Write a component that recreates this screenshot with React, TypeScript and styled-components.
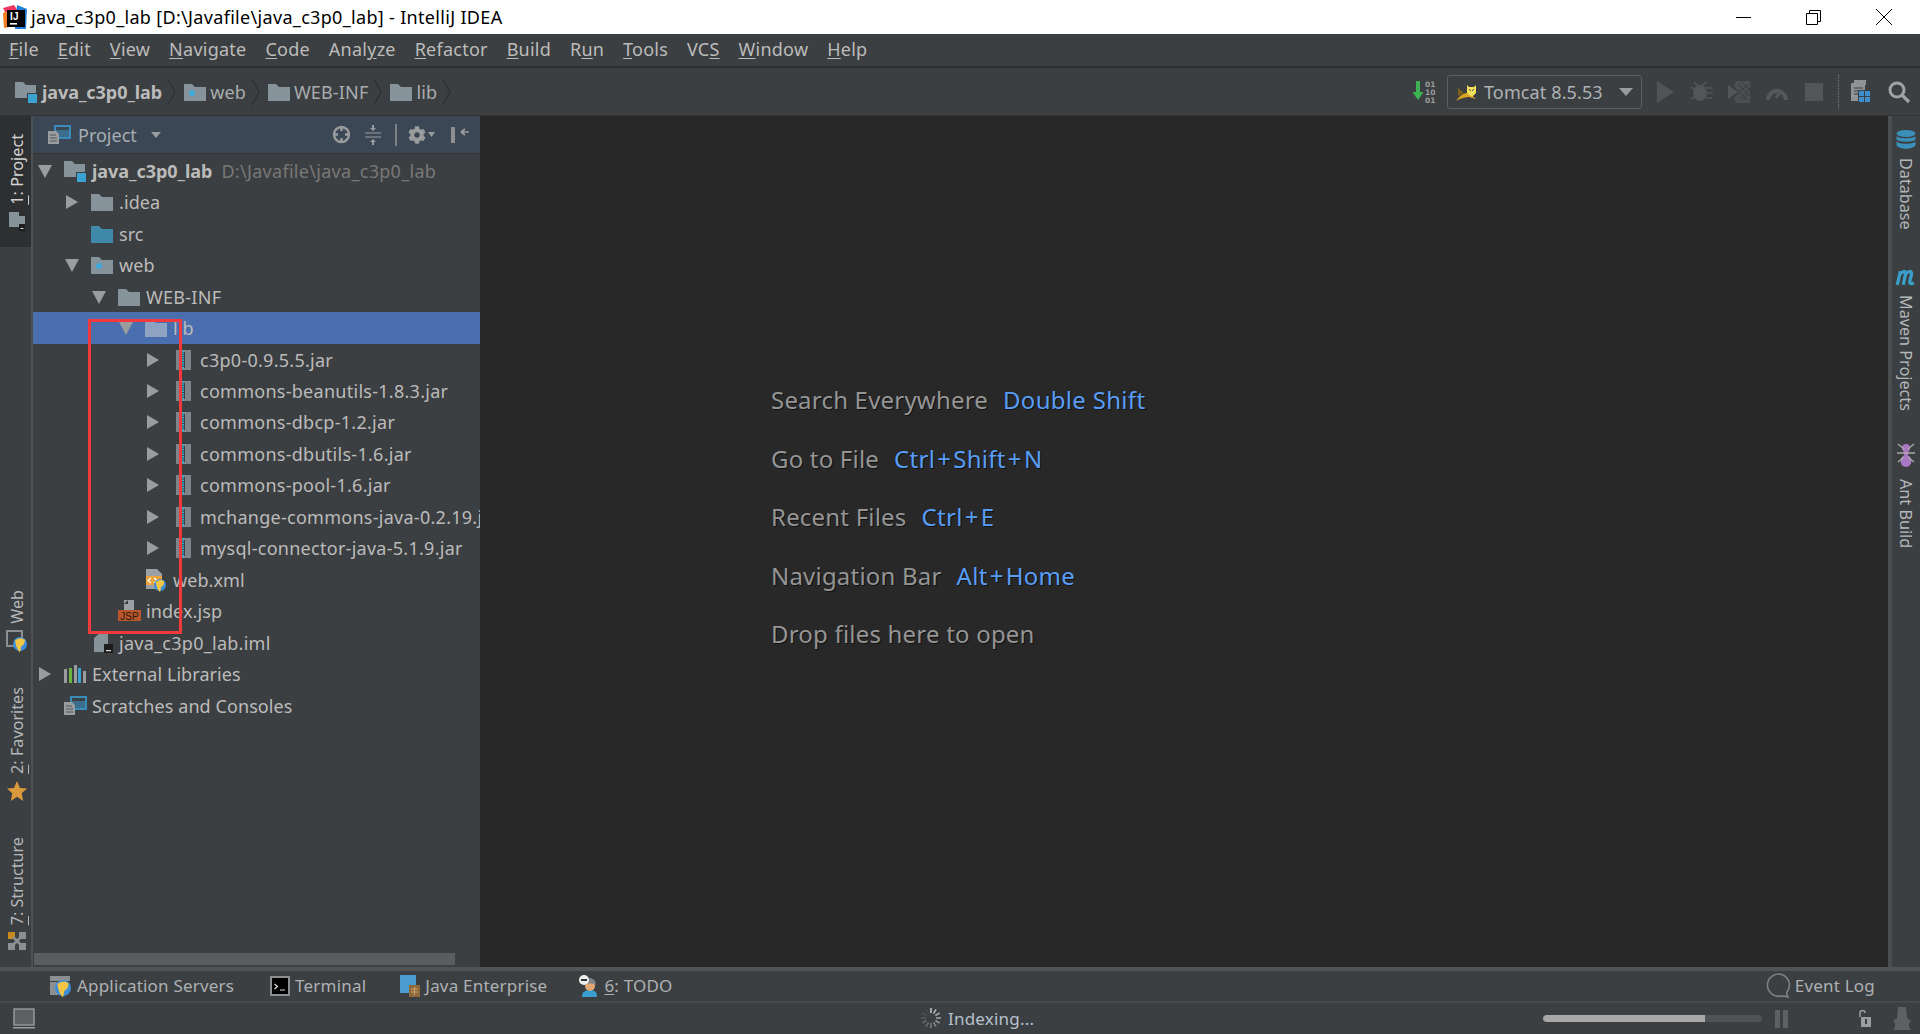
import React from "react";
import styled, { createGlobalStyle } from "styled-components";
import { FaCog } from "react-icons/fa";

const Global = createGlobalStyle`
  html, body { margin: 0; padding: 0; background: #3c3f41; }
  * { box-sizing: border-box; }
`;
const UI = `"Noto Sans", "Open Sans", sans-serif`;

const Win = styled.div`
  width: 1920px; height: 1034px; display: flex; flex-direction: column; overflow: hidden;
  background: #3c3f41; font-family: ${UI}; color: #bbb;
`;
const TitleBar = styled.div`
  height: 34px; flex: none; background: #fff; color: #000; display: flex; align-items: center;
  padding-left: 3px; font-size: 18px; letter-spacing: 0.32px;
`;
const TitleText = styled.span` margin-left: 4px; flex: 1; `;
const WinButtons = styled.div` display: flex; align-items: center; padding-right: 28px; gap: 55px; `;
const MenuBar = styled.div`
  height: 34px; flex: none; display: flex; align-items: center; padding: 0 0 2px 9px; gap: 18.9px;
  font-size: 18px; border-bottom: 2px solid #2c2c2c; letter-spacing: 0.25px;
`;
const NavBar = styled.div`
  height: 48px; flex: none; display: flex; align-items: center; padding: 0 10px 0 15px;
  border-bottom: 1px solid #323232; font-size: 18px;
`;
const Crumb = styled.span<{ $bold?: boolean }>`
  margin-left: 4px; font-weight: ${p => (p.$bold ? 700 : 400)}; color: ${p => (p.$bold ? "#bbb" : "#a9adb0")};
  letter-spacing: ${p => (p.$bold ? "-0.05px" : "0.15px")};
`;
const Chevron = styled.span` display: flex; margin: 0 8px 0 6px; `;
const Spacer = styled.div` flex: 1; `;
const ToolIcon = styled.span<{ $ml?: number }>` display: flex; margin-left: ${p => p.$ml ?? 0}px; `;
const RunCombo = styled.div`
  width: 195px; height: 34px; margin-left: 10px; border: 1px solid #5b5e60; border-radius: 3px; background: #3c3f41;
  display: flex; align-items: center; padding: 0 0 0 8px; font-size: 18px; color: #adb2b5; letter-spacing: 0.12px;
`;
const ComboText = styled.span` margin-left: 6px; flex: 1; `;
const DotSep = styled.span`
  width: 0; height: 34px; border-left: 1px dotted #777; margin-left: 15px;
`;
const Main = styled.div` flex: 1; display: flex; min-height: 0; `;
const LeftStrip = styled.div`
  width: 33px; flex: none; display: flex; flex-direction: column; justify-content: space-between;
  border-right: 2px solid #4d4f51; padding-bottom: 17px;
`;
const RightStrip = styled.div`
  width: 32px; flex: none; display: flex; flex-direction: column; border-left: 4px solid #4b4d4f; padding-top: 14px;
`;
const StripGroup = styled.div` display: flex; flex-direction: column; gap: 36px; `;
const SideTab = styled.div<{ $active?: boolean; $right?: boolean; $gap?: number; $mt?: number }>`
  display: flex; flex-direction: column; align-items: center; gap: ${p => p.$gap ?? 7}px;
  background: ${p => (p.$active ? "#2d2f30" : "transparent")};
  margin-top: ${p => p.$mt ?? 0}px;
  padding: ${p => (p.$active ? "18px 0 16px 3px" : p.$right ? "0" : "0 0 0 3px")};
`;
const VLabel = styled.span<{ $right?: boolean; $active?: boolean }>`
  writing-mode: vertical-rl; transform: ${p => (p.$right ? "none" : "rotate(180deg)")};
  font-size: 16.2px; line-height: 20px; white-space: nowrap; color: ${p => (p.$active ? "#d4d4d4" : "#b4b8ba")};
  letter-spacing: 0;
`;
const Panel = styled.div` width: 447px; flex: none; display: flex; flex-direction: column; position: relative; `;
const PanelHeader = styled.div`
  height: 38px; flex: none; background: #3b4754; border-bottom: 1px solid #323232; display: flex; align-items: center;
  padding-left: 15px; font-size: 18px; color: #a7adb3;
`;
const HeaderTitle = styled.span` margin-left: 8px; `;
const HSep = styled.span` width: 2px; height: 22px; background: #7b8186; margin-left: 14px; `;
const Tree = styled.div` flex: 1; overflow: hidden; padding-top: 1px; `;
const Row = styled.div<{ $depth: number; $selected?: boolean }>`
  height: 31.47px; display: flex; align-items: center; white-space: nowrap; overflow: hidden;
  padding-left: ${p => 4 + 27 * p.$depth}px; font-size: 18px;
  background: ${p => (p.$selected ? "#4b6eaf" : "transparent")}; color: #bbb;
`;
const ArrowSlot = styled.span` width: 27px; flex: none; display: flex; padding-left: 1px; `;
const IconSlot = styled.span` width: 27px; flex: none; display: flex; align-items: center; `;
const RowName = styled.span<{ $bold?: boolean; $wide?: boolean }>`
  margin-left: 1px; font-weight: ${p => (p.$bold ? 700 : 400)};
  letter-spacing: ${p => (p.$bold ? "-0.03px" : p.$wide ? "0.27px" : "0.08px")};
`;
const RowHint = styled.span` margin-left: 9px; color: #787878; letter-spacing: 0.3px; `;
const Mark = styled.div`
  position: absolute; left: 55px; top: 203px; width: 94px; height: 315px; border: 3px solid #f23a3c; pointer-events: none;
`;
const ScrollTrack = styled.div` height: 14px; flex: none; padding: 0 25px 2px 1px; `;
const ScrollThumb = styled.div` height: 12px; background: #5a5c5e; `;
const Editor = styled.div`
  flex: 1; background: #282828; display: flex; flex-direction: column; gap: 24.6px; padding: 267px 0 0 291px;
`;
const Hint = styled.div`
  font-size: 24px; line-height: 34px; color: #959595; text-shadow: 1px 1px 0 #111; letter-spacing: 0.2px;
`;
const Key = styled.span` color: #589df6; margin-left: 15px; letter-spacing: 0.3px; `;
const Plus = styled.span` margin: 0 2px; `;
const BottomBar = styled.div`
  height: 34px; flex: none; border-top: 4px solid #515354; display: flex; align-items: center; font-size: 17px; color: #adb1b4; letter-spacing: 0.2px;
  padding-bottom: 1px;
`;
const BottomTab = styled.div<{ $ml: number }>`
  display: flex; align-items: center; gap: 5px; margin-left: ${p => p.$ml}px;
`;
const StatusBar = styled.div`
  height: 33px; flex: none; border-top: 2px solid #46484a; display: flex; align-items: center; font-size: 17px; color: #b4c0cc;
  padding-left: 13px; letter-spacing: 0.2px;
`;
const Indexing = styled.div` display: flex; align-items: center; gap: 7px; margin-left: 886px; width: 622px; padding-bottom: 1px; `;
const Progress = styled.div` width: 219px; height: 7px; border-radius: 4px; background: #505254; overflow: hidden; flex: none; `;
const ProgressFill = styled.div` height: 100%; background: #a8a8a8; border-radius: 4px 0 0 4px; `;

const Svg = ({ w, h, children, vb }: { w: number; h: number; vb?: string; children: React.ReactNode }) => (
  <svg width={w} height={h} viewBox={vb ?? `0 0 ${w} ${h}`} style={{ flex: "none", overflow: "visible" }}>{children}</svg>
);

const ArrowRight = () => <Svg w={14} h={14}><path d="M1 0l12 7-12 7z" fill="#9a9c9e" /></Svg>;
const ArrowDown = () => <Svg w={14} h={14}><path d="M0 1h14L7 14z" fill="#9a9c9e" /></Svg>;
const Folder = ({ c = "#87939a", dot }: { c?: string; dot?: boolean }) => (
  <Svg w={22} h={20}>
    <path d="M0 2h8l3 3h11v14H0z" fill={c} />
    {dot && <circle cx="8" cy="11" r="3" fill="#40a8d8" />}
  </Svg>
);
const RootFolder = () => (
  <Svg w={23} h={22}>
    <path d="M0 1h8l3 3h10v13H0z" fill="#87939a" />
    <rect x="12" y="12" width="11" height="10" fill="#3c3f41" />
    <rect x="13" y="13" width="9" height="9" fill="#3aa3d2" />
  </Svg>
);
const Jar = () => (
  <Svg w={20} h={20}>
    <rect x="4" y="0" width="4" height="20" fill="#7d858a" />
    <rect x="13" y="0" width="6" height="20" fill="#7d858a" />
    <rect x="4" y="0" width="15" height="2" fill="#7d858a" />
    <rect x="4" y="18" width="15" height="2" fill="#7d858a" />
    <path d="M10.5 0v20" stroke="#35b4d8" strokeWidth="3" strokeDasharray="1.4 1" />
  </Svg>
);
const Globe = ({ x, y, r }: { x: number; y: number; r: number }) => (
  <g>
    <circle cx={x} cy={y} r={r} fill="#3d8ed8" />
    <path d={`M${x - r * 0.7} ${y - r * 0.5}q${r * 0.7} ${-r * 0.6} ${r * 1.4} ${-r * 0.1}q0 ${r * 0.7} ${-r * 0.5} ${r * 0.9}l${-r * 0.2} ${r * 0.9}q${-r * 0.6} ${-r * 0.6} ${-r * 0.7} ${-r * 1.7}z`} fill="#f3c544" />
  </g>
);
const XmlIcon = () => (
  <Svg w={22} h={22}>
    <path d="M1 0h11l5 5v15H1z" fill="#9aa1a5" />
    <rect x="1" y="7" width="16" height="9" fill="#eda13a" />
    <path d="M6 9l-3 2.5 3 2.5M9 9l3 2.5-3 2.5" stroke="#fff" strokeWidth="1.2" fill="none" />
    <Globe x={15} y={16} r={6} />
  </Svg>
);
const JspIcon = () => (
  <Svg w={24} h={22}>
    <path d="M6 0h10v10H6z" fill="#9aa1a5" />
    <path d="M6 4l4-4v4z" fill="#3c3f41" />
    <rect x="0" y="10" width="23" height="11" fill="#b7562a" />
    <text x="11.5" y="19.5" textAnchor="middle" fontFamily={"Liberation Sans, sans-serif"} fontSize="10" fill="#2a1a10">JSP</text>
  </Svg>
);
const ImlIcon = () => (
  <Svg w={24} h={22}>
    <path d="M3 6l7-6h7v12h-4v8H3z" fill="#87939a" />
    <rect x="13" y="12" width="9" height="9" fill="#1e1e1e" />
    <rect x="15" y="18" width="5" height="1.2" fill="#ddd" />
  </Svg>
);
const LibIcon = () => (
  <Svg w={22} h={20}>
    <rect x="0" y="5" width="3" height="14" fill="#9a9c9e" />
    <rect x="5" y="4" width="3" height="15" fill="#6cb33f" />
    <rect x="10" y="1" width="3" height="18" fill="#9a9c9e" />
    <rect x="14" y="4" width="3" height="15" fill="#3aa3d2" />
    <rect x="19" y="7" width="3" height="12" fill="#9a9c9e" />
  </Svg>
);
const ProjectIcon = () => (
  <Svg w={22} h={18}>
    <rect x="7" y="0" width="15" height="12" fill="none" stroke="#3a8cb8" strokeWidth="2" />
    <rect x="8" y="4" width="13" height="7" fill="#3a6e8c" />
    <path d="M0 5h8l3 3v10H0z" fill="#9a9c9e" />
    <path d="M2 9h6M2 12h7M2 15h7" stroke="#555" strokeWidth="1" />
  </Svg>
);
const Logo = () => (
  <Svg w={24} h={26}>
    <path d="M0 4L11 1l4 6-11 5z" fill="#f0355f" />
    <path d="M0 9l5-2 1 16-5 1z" fill="#f57c1f" />
    <path d="M14 1l10 4-1 20H12z" fill="#1f7ed8" />
    <rect x="4" y="6" width="18" height="17" fill="#000" />
    <text x="7" y="15.5" fontFamily={"Liberation Sans, sans-serif"} fontSize="10" fontWeight="700" fill="#fff">IJ</text>
    <rect x="7" y="19" width="7" height="1.6" fill="#fff" />
  </Svg>
);
const Tomcat = () => (
  <Svg w={22} h={20}>
    <path d="M0 19C5 12 8 11 13 11l7 6-7-2c-3 0-8 1-13 4z" fill="#d9a520" />
    <path d="M2 6l6 5-6 3z" fill="#8a6a10" opacity=".8" />
    <path d="M11 3l2 2h5l2-2v8l-4 4-5-4z" fill="#f2df5a" />
    <path d="M13 7l2 2M18 7l-2 2" stroke="#555" strokeWidth="1" />
  </Svg>
);
const Make = () => (
  <Svg w={24} h={24}>
    <path d="M3 1h4v11h3.5L5 20-.5 12H3z" fill="#3db354" />
    <text x="12" y="7" fontFamily={"DejaVu Sans, sans-serif"} fontSize="7.5" fontWeight="700" fill="#9a9c9e">01</text>
    <text x="12" y="15" fontFamily={"DejaVu Sans, sans-serif"} fontSize="7.5" fontWeight="700" fill="#9a9c9e">10</text>
    <text x="12" y="23" fontFamily={"DejaVu Sans, sans-serif"} fontSize="7.5" fontWeight="700" fill="#9a9c9e">01</text>
  </Svg>
);
const Run = () => <Svg w={17} h={22}><path d="M0 0l17 11L0 22z" fill="#515355" /></Svg>;
const Bug = () => (
  <Svg w={22} h={22}>
    <ellipse cx="9" cy="12" rx="7" ry="8" fill="#535556" />
    <path d="M3 1l4 4M15 1l-4 4M15 7h6M16 12h6M15 17h6M0 6l3 2M0 18l3-2" stroke="#535556" strokeWidth="1.6" fill="none" />
  </Svg>
);
const Coverage = () => (
  <Svg w={22} h={22}>
    <path d="M0 4l10 7L0 18z" fill="#535556" />
    <path d="M8 0l14 0v22H8l-2-5 5-6-5-6z" fill="#535556" opacity=".7" />
    <path d="M10 3l10 10M14 1l8 8M10 9l9 10M20 3L9 14M14 20l8-8M22 7L11 19" stroke="#3c3f41" strokeWidth="1" />
  </Svg>
);
const Profile = () => (
  <Svg w={22} h={16}>
    <path d="M2 16a9 9 0 1 1 18 0" fill="none" stroke="#555758" strokeWidth="4" />
    <path d="M10 14l5-8" stroke="#555758" strokeWidth="3" />
  </Svg>
);
const Stop = () => <Svg w={18} h={18}><rect width="18" height="18" fill="#535556" /></Svg>;
const Structure = () => (
  <Svg w={22} h={23}>
    <path d="M5 0h12v5H5z" fill="#8f9395" />
    <path d="M2 3h14v18H2z" fill="#8f9395" />
    <path d="M5 8h9M5 11h9M5 14h9" stroke="#3c3f41" strokeWidth="1.2" />
    <rect x="9" y="10" width="13" height="13" fill="#3c3f41" />
    <path d="M10 11h5v5h-5zM16 11h5v5h-5zM10 17h5v5h-5zM16 17h5v5h-5z" fill="#3b8fd0" />
  </Svg>
);
const SearchIco = () => (
  <Svg w={22} h={22}>
    <circle cx="9" cy="9" r="7" fill="none" stroke="#a0a2a4" strokeWidth="3" />
    <path d="M14 14l7 7" stroke="#a0a2a4" strokeWidth="3.2" />
  </Svg>
);
const Locate = () => (
  <Svg w={19} h={19}>
    <circle cx="9.5" cy="9.5" r="7.5" fill="none" stroke="#9a9c9e" strokeWidth="2.4" />
    <path d="M9.5 1v5M9.5 13v5M1 9.5h5M13 9.5h5" stroke="#9a9c9e" strokeWidth="2.4" />
  </Svg>
);
const Collapse = () => (
  <Svg w={16} h={20}>
    <path d="M0 8h16M0 12h16" stroke="#9a9c9e" strokeWidth="1.2" />
    <path d="M8 6l-3-3h2V0h2v3h2zM8 14l-3 3h2v3h2v-3h2z" fill="#9a9c9e" />
  </Svg>
);
const Hide = () => (
  <Svg w={18} h={18}>
    <rect x="0" y="1" width="4" height="16" fill="#8d8f91" />
    <path d="M18 6H10M10 6l4-3M10 6l4 3" stroke="#9a9c9e" strokeWidth="1.6" fill="none" />
  </Svg>
);
const SmallCaret = () => <Svg w={10} h={6}><path d="M0 0h10L5 6z" fill="#9a9c9e" /></Svg>;
const Crumbsep = () => <Svg w={8} h={26}><path d="M0 0l7 13-7 13" fill="none" stroke="#2f3133" strokeWidth="1.4" /></Svg>;
const Star = () => <Svg w={20} h={20}><path d="M10 0l3 7 7 .6-5.3 4.7L16.2 20 10 15.8 3.8 20l1.5-7.7L0 7.6 7 7z" fill="#d99a3c" /></Svg>;
const StructIco = () => (
  <Svg w={18} h={18}>
    <rect x="0" y="0" width="7" height="7" fill="#c68a1e" />
    <rect x="11" y="0" width="7" height="7" fill="#8b8f92" />
    <rect x="0" y="11" width="7" height="7" fill="#8b8f92" />
    <rect x="11" y="11" width="7" height="7" fill="#8b8f92" />
    <path d="M5 5l8 8M13 5l-8 8" stroke="#8b8f92" strokeWidth="2.5" />
  </Svg>
);
const WebIco = () => (
  <Svg w={20} h={20}>
    <rect x="0" y="0" width="15" height="15" fill="none" stroke="#8b8f92" strokeWidth="2" />
    <Globe x={13} y={13} r={7} />
  </Svg>
);
const FolderSmall = () => (
  <Svg w={16} h={19}>
    <path d="M0 0h10v4h6v11H0z" fill="#87939a" />
    <rect x="10" y="12" width="6" height="7" fill="#1e1e1e" />
    <rect x="11.5" y="16" width="3" height="1" fill="#ddd" />
  </Svg>
);
const Db = () => (
  <Svg w={20} h={20}>
    <ellipse cx="10" cy="3.5" rx="9.5" ry="3.5" fill="#3a90b8" />
    <path d="M.5 6c2 3 17 3 19 0v3.5c-2 3-17 3-19 0zM.5 11.5c2 3 17 3 19 0V15c-2 5-17 5-19 0z" fill="#3a90b8" />
  </Svg>
);
const Maven = () => (
  <Svg w={22} h={16} vb="0 3 20 14.500">
    <path d="M2 16.5L5 4M4.5 7c2-3 5.5-4 5 0l-2 9.5M9.5 7c2-3 6-4 5.500 0l-1.500 6c-.5 2.500 1.500 3 3.500 1.500" fill="none" stroke="#3a9fc8" strokeWidth="3" />
  </Svg>
);
const Ant = () => (
  <Svg w={18} h={24}>
    <ellipse cx="9" cy="5" rx="4" ry="4" fill="#a977c4" />
    <ellipse cx="9" cy="10" rx="2.5" ry="3" fill="#a977c4" />
    <ellipse cx="9" cy="18" rx="5.5" ry="6" fill="#a977c4" />
    <path d="M1 1l6 5M17 1l-6 5M0 10h18M1 19l6-5M17 19l-6-5" stroke="#a9a9a9" strokeWidth="1.3" />
  </Svg>
);
const ServerIco = () => (
  <Svg w={22} h={22}>
    <rect x="0" y="1" width="20" height="5" fill="#8b8f92" />
    <rect x="0" y="7" width="12" height="13" fill="#8b8f92" />
    <Globe x={13} y={13} r={8} />
  </Svg>
);
const TermIco = () => (
  <Svg w={20} h={20}>
    <rect x="1" y="1" width="18" height="18" fill="#000" stroke="#8b8f92" strokeWidth="2" />
    <path d="M4.5 8l3 2.5-3 2.5M10 14h5" stroke="#ddd" strokeWidth="1.2" fill="none" />
  </Svg>
);
const JeeIco = () => (
  <Svg w={20} h={22}>
    <rect x="0" y="0" width="16" height="18" fill="#4b9ad0" />
    <rect x="9" y="10" width="11" height="12" fill="#8d6a3c" />
    <path d="M11 14h7M11 17h7M14.5 12v8" stroke="#c9a06a" strokeWidth="1" />
  </Svg>
);
const TodoIco = () => (
  <Svg w={20} h={22}>
    <path d="M3 22c0-5 3-7 8-7s7 2 7 7z" fill="#3a9fd0" />
    <circle cx="11" cy="11" r="5" fill="#e0a872" />
    <path d="M6 10c0-5 3-7 5-7s6 2 6 7c-3-2-8-2-11 0z" fill="#808386" />
    <circle cx="5" cy="5" r="5" fill="#eee" />
    <rect x="2" y="4" width="6" height="2" fill="#333" />
  </Svg>
);
const EventIco = () => (
  <Svg w={25} h={26}>
    <path d="M23 24c-1-2-2-3-1-5a11 11 0 1 0-7 4c3 0 6 0 8 1z" fill="none" stroke="#7f8284" strokeWidth="1.5" />
  </Svg>
);
const LayoutIco = () => (
  <Svg w={22} h={21}>
    <rect x="1" y="1" width="20" height="16" fill="#5e5f60" stroke="#9a9c9e" strokeWidth="1.4" />
    <rect x="0" y="19" width="22" height="1.5" fill="#9a9c9e" />
  </Svg>
);
const Spinner = () => (
  <Svg w={20} h={20}>
    {Array.from({ length: 12 }).map((_, i) => (
      <path key={i} d="M10 0v5" stroke={`rgb(${190 - i * 11},${190 - i * 11},${190 - i * 11})`} strokeWidth="1.6" transform={`rotate(${i * 30} 10 10)`} />
    ))}
  </Svg>
);
const Pause = () => <Svg w={14} h={18}><rect width="5" height="18" fill="#5e6163" /><rect x="8" width="5" height="18" fill="#5e6163" /></Svg>;
const Lock = () => (
  <Svg w={15} h={17}>
    <path d="M3 7V3a2.5 2.5 0 0 1 5 0" fill="none" stroke="#9a9c9e" strokeWidth="1.5" />
    <rect x="4" y="7" width="10" height="10" fill="#9a9c9e" />
    <rect x="8" y="9" width="2" height="5" fill="#3c3f41" />
  </Svg>
);
const Hector = () => (
  <Svg w={18} h={24}>
    <path d="M5 0h8l1 11 4 3-2 2v4l2 3H0l2-3v-4l-2-2 4-3z" fill="#5e6163" />
  </Svg>
);

const U = styled.span` text-decoration: underline; text-underline-offset: 2px; text-decoration-thickness: 1px; `;

const menus: [string, string, string][] = [
  ["", "F", "ile"], ["", "E", "dit"], ["", "V", "iew"], ["", "N", "avigate"], ["", "C", "ode"], ["Anal", "y", "ze"],
  ["", "R", "efactor"], ["", "B", "uild"], ["R", "u", "n"], ["", "T", "ools"], ["VC", "S", ""], ["", "W", "indow"], ["", "H", "elp"],
];

type Item = { depth: number; arrow?: "r" | "d"; icon: React.ReactNode; name: string; bold?: boolean; wide?: boolean; hint?: string; selected?: boolean };
const jar = (name: string): Item => ({ depth: 4, arrow: "r", icon: <Jar />, name, wide: true });
const items: Item[] = [
  { depth: 0, arrow: "d", icon: <RootFolder />, name: "java_c3p0_lab", bold: true, hint: "D:\\Javafile\\java_c3p0_lab" },
  { depth: 1, arrow: "r", icon: <Folder />, name: ".idea" },
  { depth: 1, icon: <Folder c="#3f8aa8" />, name: "src" },
  { depth: 1, arrow: "d", icon: <Folder dot />, name: "web" },
  { depth: 2, arrow: "d", icon: <Folder />, name: "WEB-INF", wide: true },
  { depth: 3, arrow: "d", icon: <Folder c="#8ea3c2" />, name: "lib", selected: true },
  jar("c3p0-0.9.5.5.jar"),
  jar("commons-beanutils-1.8.3.jar"),
  jar("commons-dbcp-1.2.jar"),
  jar("commons-dbutils-1.6.jar"),
  jar("commons-pool-1.6.jar"),
  jar("mchange-commons-java-0.2.19.jar"),
  jar("mysql-connector-java-5.1.9.jar"),
  { depth: 3, icon: <XmlIcon />, name: "web.xml" },
  { depth: 2, icon: <JspIcon />, name: "index.jsp" },
  { depth: 1, icon: <ImlIcon />, name: "java_c3p0_lab.iml", wide: true },
  { depth: 0, arrow: "r", icon: <LibIcon />, name: "External Libraries" },
  { depth: 0, icon: <ProjectIcon />, name: "Scratches and Consoles" },
];

const hints: [string, string?][] = [
  ["Search Everywhere", "Double Shift"],
  ["Go to File", "Ctrl+Shift+N"],
  ["Recent Files", "Ctrl+E"],
  ["Navigation Bar", "Alt+Home"],
  ["Drop files here to open"],
];

const KeyText = ({ text }: { text: string }) => (
  <Key>
    {text.split("+").map((part, i) => (
      <React.Fragment key={part}>{i > 0 && <Plus>+</Plus>}{part}</React.Fragment>
    ))}
  </Key>
);

export default function App() {
  return (
    <Win>
      <Global />
      <TitleBar>
        <Logo />
        <TitleText>java_c3p0_lab [D:\Javafile\java_c3p0_lab] - IntelliJ IDEA</TitleText>
        <WinButtons>
          <Svg w={15} h={15}><path d="M0 7.5h15" stroke="#000" strokeWidth="1" /></Svg>
          <Svg w={15} h={15}><path d="M3.5 3V.5h11v11H12M.5 3.5h11v11H.5z" fill="none" stroke="#000" strokeWidth="1" /></Svg>
          <Svg w={16} h={16}><path d="M0 0l16 16M16 0L0 16" stroke="#000" strokeWidth="1" /></Svg>
        </WinButtons>
      </TitleBar>
      <MenuBar>
        {menus.map(([a, u, b]) => <span key={a + u + b}>{a}<U>{u}</U>{b}</span>)}
      </MenuBar>
      <NavBar>
        <RootFolder />
        <Crumb $bold>java_c3p0_lab</Crumb>
        <Chevron><Crumbsep /></Chevron>
        <Folder dot />
        <Crumb>web</Crumb>
        <Chevron><Crumbsep /></Chevron>
        <Folder />
        <Crumb>WEB-INF</Crumb>
        <Chevron><Crumbsep /></Chevron>
        <Folder />
        <Crumb>lib</Crumb>
        <Chevron><Crumbsep /></Chevron>
        <Spacer />
        <Make />
        <RunCombo>
          <Tomcat />
          <ComboText>Tomcat 8.5.53</ComboText>
          <ToolIcon><Svg w={14} h={8}><path d="M0 0h14L7 8z" fill="#9a9c9e" /></Svg></ToolIcon>
          <ToolIcon $ml={8} />
        </RunCombo>
        <ToolIcon $ml={15}><Run /></ToolIcon>
        <ToolIcon $ml={17}><Bug /></ToolIcon>
        <ToolIcon $ml={15}><Coverage /></ToolIcon>
        <ToolIcon $ml={16}><Profile /></ToolIcon>
        <ToolIcon $ml={17}><Stop /></ToolIcon>
        <DotSep />
        <ToolIcon $ml={10}><Structure /></ToolIcon>
        <ToolIcon $ml={17}><SearchIco /></ToolIcon>
      </NavBar>
      <Main>
        <LeftStrip>
          <SideTab $active>
            <VLabel $active><U>1</U>: Project</VLabel>
            <FolderSmall />
          </SideTab>
          <StripGroup>
            <SideTab><VLabel>Web</VLabel><WebIco /></SideTab>
            <SideTab><VLabel><U>2</U>: Favorites</VLabel><Star /></SideTab>
            <SideTab><VLabel><U>7</U>: Structure</VLabel><StructIco /></SideTab>
          </StripGroup>
        </LeftStrip>
        <Panel>
          <PanelHeader>
            <ProjectIcon />
            <HeaderTitle>Project</HeaderTitle>
            <ToolIcon $ml={14}><SmallCaret /></ToolIcon>
            <ToolIcon $ml={171}><Locate /></ToolIcon>
            <ToolIcon $ml={14}><Collapse /></ToolIcon>
            <HSep />
            <ToolIcon $ml={11}><FaCog size={18} color="#9a9c9e" /></ToolIcon>
            <ToolIcon $ml={2}><Svg w={7} h={5}><path d="M0 0h7L3.5 5z" fill="#9a9c9e" /></Svg></ToolIcon>
            <ToolIcon $ml={16}><Hide /></ToolIcon>
          </PanelHeader>
          <Tree>
            {items.map(it => (
              <Row key={it.name} $depth={it.depth} $selected={it.selected}>
                <ArrowSlot>{it.arrow === "r" ? <ArrowRight /> : it.arrow === "d" ? <ArrowDown /> : null}</ArrowSlot>
                <IconSlot>{it.icon}</IconSlot>
                <RowName $bold={it.bold} $wide={it.wide}>{it.name}</RowName>
                {it.hint && <RowHint>{it.hint}</RowHint>}
              </Row>
            ))}
          </Tree>
          <ScrollTrack><ScrollThumb /></ScrollTrack>
          <Mark />
        </Panel>
        <Editor>
          {hints.map(([t, k]) => (
            <Hint key={t}>{t}{k && <KeyText text={k} />}</Hint>
          ))}
        </Editor>
        <RightStrip>
          <SideTab $right $gap={8}><Db /><VLabel $right>Database</VLabel></SideTab>
          <SideTab $right $gap={9} $mt={40}><Maven /><VLabel $right>Maven Projects</VLabel></SideTab>
          <SideTab $right $gap={12} $mt={32}><Ant /><VLabel $right>Ant Build</VLabel></SideTab>
        </RightStrip>
      </Main>
      <BottomBar>
        <BottomTab $ml={50}><ServerIco /><span>Application Servers</span></BottomTab>
        <BottomTab $ml={36}><TermIco /><span>Terminal</span></BottomTab>
        <BottomTab $ml={34}><JeeIco /><span>Java Enterprise</span></BottomTab>
        <BottomTab $ml={32}><TodoIco /><span><U>6</U>: TODO</span></BottomTab>
        <Spacer />
        <BottomTab $ml={0}><EventIco /><span>Event Log</span></BottomTab>
        <ToolIcon $ml={45} />
      </BottomBar>
      <StatusBar>
        <LayoutIco />
        <Indexing><Spinner /><span>Indexing...</span></Indexing>
        <Progress><ProgressFill style={{ width: "74%" }} /></Progress>
        <ToolIcon $ml={13}><Pause /></ToolIcon>
        <ToolIcon $ml={68}><Lock /></ToolIcon>
        <ToolIcon $ml={21}><Hector /></ToolIcon>
      </StatusBar>
    </Win>
  );
}
